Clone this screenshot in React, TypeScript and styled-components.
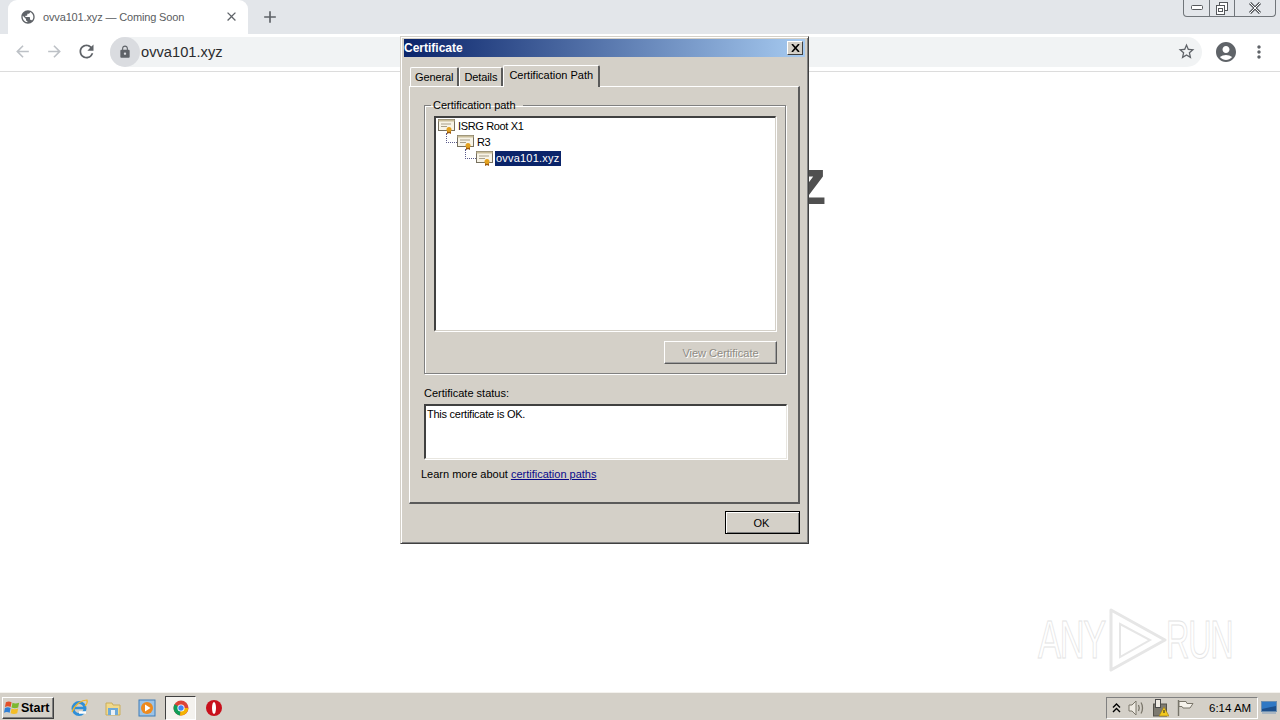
import styled, { createGlobalStyle } from "styled-components";
import {
  MdAccountCircle,
  MdAdd,
  MdArrowBack,
  MdArrowForward,
  MdClose,
  MdLock,
  MdMoreVert,
  MdPublic,
  MdRefresh,
  MdStarBorder,
} from "react-icons/md";

const GlobalStyle = createGlobalStyle`
  html, body {
    margin: 0;
    padding: 0;
    width: 1280px;
    height: 720px;
    overflow: hidden;
    background: #fff;
    font-family: "Liberation Sans", Arial, sans-serif;
  }
  * { box-sizing: border-box; }
`;

const CertIcon = () => (
  <svg width="18" height="17" viewBox="0 0 18 17">
    <rect x="0.5" y="1.5" width="16" height="11" fill="#f7f3e6" stroke="#77705f" />
    <rect x="0.5" y="1.5" width="16" height="2" fill="#c9bd9a" />
    <path d="M3 6h10M3 8.500h6" stroke="#a89f8a" />
    <path d="M9 12l0 4 2-1 2 1 0-4z" fill="#9a5a10" />
    <circle cx="11" cy="11.500" r="2.500" fill="#e3a11e" />
  </svg>
);

const WinFlag = () => (
  <svg width="17" height="17" viewBox="0 0 18 17">
    <path d="M2 3c2-1 4-1 6 0l-1 5c-2-1-4-1-6 0z" fill="#e2502a" />
    <path d="M9 3.500c2 1 4 1 7 0l-1 5c-2 1-5 1-7 0z" fill="#7cb82f" />
    <path d="M1 9c2-1 4-1 6 0l-1 5c-2-1-4-1-6 0z" fill="#2f7fd6" />
    <path d="M8 9.500c2 1 4 1 7 0l-1 5c-2 1-5 1-7 0z" fill="#f4bd27" />
  </svg>
);

const IeIcon = () => (
  <svg width="20" height="20" viewBox="0 0 20 20">
    <circle cx="10" cy="10.500" r="6" fill="none" stroke="#2f8fd8" strokeWidth="3" />
    <path d="M5 10h10" stroke="#2f8fd8" strokeWidth="2.500" />
    <path d="M10 14.500h7" stroke="#fff" strokeWidth="2.500" />
    <path d="M3 14C6 6 13 2 18 2c1 3-1 5-2 6" fill="none" stroke="#f0b429" strokeWidth="1.200" />
  </svg>
);

const FolderIcon = () => (
  <svg width="18" height="18" viewBox="0 0 18 18">
    <path d="M2 4h6l1 2h7v10H2z" fill="#f1d98a" stroke="#c9ad5c" />
    <rect x="4" y="9" width="10" height="7" fill="#6ea9d8" />
    <rect x="7" y="11" width="4" height="5" fill="#e9f0f6" />
  </svg>
);

const MediaIcon = () => (
  <svg width="18" height="18" viewBox="0 0 18 18">
    <rect x="1" y="1" width="16" height="16" fill="#9cc3e6" stroke="#3f7cb8" />
    <circle cx="9" cy="9" r="6" fill="#ee8a1d" />
    <path d="M7 5.500l5.500 3.500L7 12.500z" fill="#fff" />
  </svg>
);

const ChromeIcon = () => (
  <svg width="16" height="16" viewBox="0 0 16 16">
    <circle cx="8" cy="8" r="7.500" fill="#db4437" />
    <path d="M8 8L1.500 4.300A7.500 7.500 0 0 0 7 15.400z" fill="#0f9d58" />
    <path d="M8 8h7.300A7.500 7.500 0 0 1 7 15.400z" fill="#f4b400" />
    <circle cx="8" cy="8" r="3.600" fill="#fff" />
    <circle cx="8" cy="8" r="2.700" fill="#4285f4" />
  </svg>
);

const OperaIcon = () => (
  <svg width="18" height="18" viewBox="0 0 18 18">
    <circle cx="9" cy="9" r="8" fill="#c8101c" />
    <ellipse cx="9" cy="9" rx="2" ry="6" fill="#fff" />
  </svg>
);

const SpeakerIcon = () => (
  <svg width="18" height="16" viewBox="0 0 18 16">
    <path d="M1 5h3l4-4v14l-4-4H1z" fill="#eeeae2" stroke="#7a766a" />
    <path d="M10.500 5c1 2 1 4 0 6M13 2.500c2 3 2 8 0 11" fill="none" stroke="#7a766a" strokeWidth="1.300" />
  </svg>
);

const NetworkIcon = () => (
  <svg width="16" height="18" viewBox="0 0 16 18">
    <rect x="0.500" y="5" width="13" height="12" fill="#7d7a70" stroke="#55524a" />
    <rect x="2.500" y="0.500" width="5" height="8" fill="#eeeae2" stroke="#4a4a4a" />
    <path d="M11 8l5 9H6z" fill="#f2c81e" stroke="#9a7a10" strokeWidth="0.600" />
    <path d="M11 11v3" stroke="#222" />
  </svg>
);

const FlagIcon = () => (
  <svg width="17" height="16" viewBox="0 0 17 16">
    <path d="M1.500 0v16" stroke="#77746a" strokeWidth="1.400" />
    <path d="M2 1.500h7l1 2h6l-3 4.500H6L5 6.500H2z" fill="#f6f3ec" stroke="#7a766a" />
  </svg>
);

const ShowDesktopIcon = () => (
  <svg width="16" height="13" viewBox="0 0 16 13">
    <rect x="0.500" y="0.500" width="15" height="10" fill="#2f78c4" stroke="#6d8fb0" />
    <path d="M1 8l14-3v5H1z" fill="#1c4f8c" />
    <rect x="1" y="11" width="14" height="2" fill="#a9b6c2" />
  </svg>
);

const CaptionMin = () => (
  <svg width="14" height="8" viewBox="0 0 14 8">
    <rect x="1.500" y="1.500" width="11" height="4" rx="1" fill="#fff" stroke="#55585c" />
  </svg>
);

const CaptionRestore = () => (
  <svg width="14" height="13" viewBox="0 0 14 13">
    <rect x="4.500" y="0.500" width="8" height="8" fill="#fff" stroke="#55585c" />
    <rect x="1.500" y="3.500" width="8" height="9" fill="#fff" stroke="#55585c" />
    <rect x="3.500" y="6.500" width="4" height="3" fill="#fff" stroke="#55585c" />
  </svg>
);

const CaptionClose = () => (
  <svg width="14" height="12" viewBox="0 0 14 12">
    <path d="M2 1l10 10M12 1L2 11" stroke="#55585c" strokeWidth="3" />
    <path d="M2 1l10 10M12 1L2 11" stroke="#fff" strokeWidth="1" />
  </svg>
);

const CERT_PATH = [
  { depth: 0, label: "ISRG Root X1", selected: false },
  { depth: 1, label: "R3", selected: false },
  { depth: 2, label: "ovva101.xyz", selected: true },
];

export default function App() {
  return (
    <Screen>
      <GlobalStyle />
      <TabStrip>
        <Tab>
          <MdPublic size={16} color="#5f6368" />
          <TabTitle>ovva101.xyz — Coming Soon</TabTitle>
          <MdClose size={15} color="#5f6368" />
        </Tab>
        <NewTab>
          <MdAdd size={20} color="#5f6368" />
        </NewTab>
        <Caption>
          <CaptionButton $width={25}>
            <CaptionMin />
          </CaptionButton>
          <CaptionButton $width={25}>
            <CaptionRestore />
          </CaptionButton>
          <CaptionButton $width={41}>
            <CaptionClose />
          </CaptionButton>
        </Caption>
      </TabStrip>

      <Toolbar>
        <NavIcons>
          <NavSlot>
            <MdArrowBack size={19} color="#bdc1c6" />
          </NavSlot>
          <NavSlot>
            <MdArrowForward size={19} color="#bdc1c6" />
          </NavSlot>
          <NavSlot>
            <MdRefresh size={21} color="#5f6368" />
          </NavSlot>
        </NavIcons>
        <Omnibox>
          <LockChip>
            <MdLock size={14} color="#5f6368" />
          </LockChip>
          <Url>ovva101.xyz</Url>
          <MdStarBorder size={19} color="#5f6368" />
        </Omnibox>
        <ToolbarEnd>
          <MdAccountCircle size={24} color="#5f6368" />
          <MdMoreVert size={20} color="#5f6368" />
        </ToolbarEnd>
      </Toolbar>

      <Page>
        <Heading>ovva101.xyz</Heading>
        <Watermark>
          <WatermarkWord $scale={0.65}>ANY</WatermarkWord>
          <WatermarkMark width="60" height="64" viewBox="0 0 60 64">
            <path d="M4 2l54 30L4 62z" fill="none" stroke="#e6e6e6" strokeWidth="3" strokeLinejoin="round" />
            <path d="M13 16l30 16-30 17z" fill="none" stroke="#e6e6e6" strokeWidth="2" />
          </WatermarkMark>
          <WatermarkWord $scale={0.61}>RUN</WatermarkWord>
        </Watermark>
      </Page>

      <Dialog>
        <TitleBar>
          <span>Certificate</span>
          <TitleClose>
            <svg width="9" height="8" viewBox="0 0 9 8">
              <path d="M1 0l7 8M8 0L1 8" stroke="#000" strokeWidth="1.600" />
            </svg>
          </TitleClose>
        </TitleBar>
        <Tabs>
          <DialogTab>General</DialogTab>
          <DialogTab>Details</DialogTab>
          <DialogTab $active>Certification Path</DialogTab>
        </Tabs>
        <TabPanel>
          <GroupBox>
            <GroupLegend>Certification path</GroupLegend>
            <TreeView>
              {CERT_PATH.map((node) => (
                <TreeRow key={node.label} $depth={node.depth}>
                  {node.depth > 0 && <TreeLine $depth={node.depth} />}
                  <CertIcon />
                  <TreeLabel $selected={node.selected}>{node.label}</TreeLabel>
                </TreeRow>
              ))}
            </TreeView>
            <GroupActions>
              <DisabledButton>View Certificate</DisabledButton>
            </GroupActions>
          </GroupBox>
          <StatusLabel>Certificate status:</StatusLabel>
          <StatusBox>This certificate is OK.</StatusBox>
          <LearnMore>
            Learn more about <LearnLink>certification paths</LearnLink>
          </LearnMore>
        </TabPanel>
        <DialogFooter>
          <OkButton>OK</OkButton>
        </DialogFooter>
      </Dialog>

      <Taskbar>
        <StartButton>
          <WinFlag />
          Start
        </StartButton>
        <QuickLaunch>
          <QuickItem>
            <IeIcon />
          </QuickItem>
          <QuickItem>
            <FolderIcon />
          </QuickItem>
          <QuickItem>
            <MediaIcon />
          </QuickItem>
          <QuickItem $active>
            <ChromeIcon />
          </QuickItem>
          <QuickItem>
            <OperaIcon />
          </QuickItem>
        </QuickLaunch>
        <Tray>
          <TraySlot $width={18}>
            <svg width="9" height="10" viewBox="0 0 9 10">
              <path d="M1 4.500l3.500-3.500L8 4.500M1 9l3.500-3.500L8 9" fill="none" stroke="#000" strokeWidth="1.400" />
            </svg>
          </TraySlot>
          <TraySlot $width={24}>
            <SpeakerIcon />
          </TraySlot>
          <TraySlot $width={24}>
            <NetworkIcon />
          </TraySlot>
          <TraySlot $width={24}>
            <FlagIcon />
          </TraySlot>
          <Clock>6:14 AM</Clock>
        </Tray>
        <ShowDesktop>
          <ShowDesktopIcon />
        </ShowDesktop>
      </Taskbar>
    </Screen>
  );
}

const Screen = styled.div`
  position: relative;
  width: 1280px;
  height: 720px;
  display: flex;
  flex-direction: column;
  overflow: hidden;
  background: #fff;
`;

const TabStrip = styled.div`
  height: 34px;
  flex: none;
  display: flex;
  align-items: flex-end;
  padding-left: 8px;
  background: #e3e6ea;
`;

const Tab = styled.div`
  width: 240px;
  height: 34px;
  display: flex;
  align-items: center;
  padding: 0 9px 1px 12px;
  background: #fff;
  border-radius: 9px 9px 0 0;
`;

const TabTitle = styled.span`
  flex: 1;
  margin-left: 7px;
  font-size: 11px;
  letter-spacing: -0.15px;
  color: #5a5d61;
`;

const NewTab = styled.div`
  width: 44px;
  height: 34px;
  display: flex;
  align-items: center;
  justify-content: center;
`;

const Caption = styled.div`
  margin-left: auto;
  margin-right: 4px;
  align-self: flex-start;
  height: 17px;
  display: flex;
  background: #e3e6ea;
  border: 1px solid #70757a;
  border-top: none;
  border-radius: 0 0 4px 4px;
`;

const CaptionButton = styled.div<{ $width: number }>`
  width: ${({ $width }) => $width}px;
  display: flex;
  align-items: center;
  justify-content: center;
  & + & {
    border-left: 1px solid #70757a;
  }
`;

const Toolbar = styled.div`
  height: 38px;
  flex: none;
  display: flex;
  align-items: center;
  padding: 0 11px 2px 6px;
  background: #fff;
  border-bottom: 1px solid #dcdcdc;
`;

const NavIcons = styled.div`
  width: 104px;
  display: flex;
  align-items: center;
`;

const NavSlot = styled.div`
  width: 32px;
  display: flex;
  align-items: center;
  justify-content: center;
`;

const Omnibox = styled.div`
  width: 1092px;
  height: 30px;
  display: flex;
  align-items: center;
  padding-right: 6px;
  background: #f1f3f4;
  border-radius: 15px;
`;

const LockChip = styled.div`
  width: 30px;
  height: 30px;
  display: flex;
  align-items: center;
  justify-content: center;
  background: #dadce0;
  border-radius: 50%;
`;

const Url = styled.span`
  flex: 1;
  margin-left: 1px;
  font-size: 14.700px;
  color: #2b2c2e;
`;

const ToolbarEnd = styled.div`
  flex: 1;
  display: flex;
  align-items: center;
  justify-content: flex-end;
  gap: 11px;
`;

const Page = styled.main`
  position: relative;
  flex: 1;
  padding-top: 73px;
  text-align: center;
`;

const Heading = styled.h1`
  margin: 0;
  font-size: 64px;
  line-height: 74px;
  font-weight: 700;
  color: #505050;
`;

const Watermark = styled.div`
  position: absolute;
  left: 1038px;
  top: 536px;
  display: flex;
  align-items: center;
  gap: 3px;
`;

const WatermarkMark = styled.svg`
  margin-right: -4px;
`;

const WatermarkWord = styled.span<{ $scale: number }>`
  width: 66px;
  font-size: 53px;
  line-height: 64px;
  letter-spacing: -2px;
  color: #fff;
  -webkit-text-stroke: 1px #e4e4e4;
  transform: scaleX(${({ $scale }) => $scale});
  transform-origin: left center;
  white-space: nowrap;
`;

const Dialog = styled.section`
  position: absolute;
  left: 400px;
  top: 36px;
  width: 409px;
  height: 508px;
  padding: 2px 3px 3px;
  display: flex;
  flex-direction: column;
  font-size: 11px;
  color: #000;
  background: #d4d0c8;
  border: 1px solid #404040;
  border-top-color: #d4d0c8;
  border-left-color: #d4d0c8;
  box-shadow: inset 1px 1px 0 #fff, inset -1px -1px 0 #808080;
`;

const TitleBar = styled.header`
  height: 18px;
  flex: none;
  display: flex;
  align-items: center;
  justify-content: space-between;
  padding: 0 2px 0 0;
  font-size: 12px;
  font-weight: 700;
  color: #fff;
  background: linear-gradient(90deg, #0a246a, #a6caf0);
`;

const TitleClose = styled.div`
  width: 16px;
  height: 14px;
  display: flex;
  align-items: center;
  justify-content: center;
  background: #d4d0c8;
  border: 1px solid #404040;
  border-top-color: #fff;
  border-left-color: #fff;
`;

const Tabs = styled.div`
  height: 29px;
  flex: none;
  display: flex;
  align-items: flex-end;
  padding-left: 6px;
`;

const DialogTab = styled.div<{ $active?: boolean }>`
  position: relative;
  height: ${({ $active }) => ($active ? 22 : 19)}px;
  padding: ${({ $active }) => ($active ? "0 5px 3px" : "0 4px")};
  display: flex;
  align-items: center;
  margin-bottom: ${({ $active }) => ($active ? -1 : 0)}px;
  letter-spacing: ${({ $active }) => ($active ? 0 : -0.1)}px;
  background: #d4d0c8;
  border: 1px solid #fff;
  border-right: 2px solid #5a5a5a;
  border-bottom: none;
  border-radius: 2px 2px 0 0;
  z-index: ${({ $active }) => ($active ? 1 : 0)};
`;

const TabPanel = styled.div`
  height: 418px;
  flex: none;
  margin: 0 5px;
  padding: 12px 12px 0 14px;
  border: 1px solid #fff;
  border-right: 2px solid #5a5a5a;
  border-bottom: 2px solid #5a5a5a;
`;

const GroupBox = styled.fieldset`
  height: 275px;
  margin: 0;
  padding: 0 9px;
  border: 1px solid #808080;
  box-shadow: 1px 1px 0 #fff, inset 1px 1px 0 #fff;
`;

const GroupLegend = styled.legend`
  margin-left: -3px;
  padding: 0 7px 0 2px;
  font-size: 11px;
  line-height: 13px;
`;

const TreeView = styled.div`
  height: 215px;
  margin-top: 4px;
  background: #fff;
  border: 2px solid #404040;
  border-right: 1px solid #d4d0c8;
  border-bottom: 1px solid #d4d0c8;
  box-shadow: 1px 1px 0 #fff;
`;

const TreeRow = styled.div<{ $depth: number }>`
  position: relative;
  height: 16px;
  display: flex;
  align-items: center;
  padding-left: ${({ $depth }) => $depth * 19 + 2}px;
`;

const TreeLine = styled.span<{ $depth: number }>`
  position: absolute;
  left: ${({ $depth }) => $depth * 19 - 9}px;
  top: -1px;
  height: 10px;
  width: 11px;
  border-left: 1px dotted #5a5a8a;
  border-bottom: 1px dotted #5a5a8a;
`;

const TreeLabel = styled.span<{ $selected: boolean }>`
  margin-left: 1px;
  padding: ${({ $selected }) => ($selected ? "1px 2px 1px 1px" : "1px")};
  line-height: 13px;
  letter-spacing: ${({ $selected }) => ($selected ? 0.2 : -0.35)}px;
  background: ${({ $selected }) => ($selected ? "#0a246a" : "transparent")};
  color: ${({ $selected }) => ($selected ? "#fff" : "#000")};
`;

const GroupActions = styled.div`
  display: flex;
  justify-content: flex-end;
  margin: 10px -1px 0 0;
`;

const DisabledButton = styled.div`
  width: 113px;
  height: 23px;
  display: flex;
  align-items: center;
  justify-content: center;
  color: #8f8c85;
  text-shadow: 1px 1px 0 #fff;
  border: 1px solid #5a5a5a;
  border-top-color: #fff;
  border-left-color: #fff;
  box-shadow: inset -1px -1px 0 #a0a0a0;
`;

const StatusLabel = styled.div`
  margin-top: 12px;
  line-height: 14px;
`;

const StatusBox = styled.div`
  width: 363px;
  height: 55px;
  margin-top: 4px;
  padding: 2px 1px;
  line-height: 13px;
  letter-spacing: -0.25px;
  background: #fff;
  border: 2px solid #404040;
  border-right: 1px solid #e8e6e0;
  border-bottom: 1px solid #e8e6e0;
  box-shadow: 1px 1px 0 #fff;
`;

const LearnMore = styled.div`
  margin: 8px 0 0 -3px;
  line-height: 14px;
`;

const LearnLink = styled.span`
  color: #0a0a8a;
  text-decoration: underline;
`;

const DialogFooter = styled.footer`
  flex: 1;
  display: flex;
  justify-content: flex-end;
  padding: 7px 5px 0 0;
`;

const OkButton = styled.div`
  width: 75px;
  height: 23px;
  display: flex;
  align-items: center;
  justify-content: center;
  padding-right: 2px;
  border: 1px solid #000;
  box-shadow: inset 1px 1px 0 #fff, inset -1px -1px 0 #808080;
`;

const Taskbar = styled.footer`
  position: relative;
  z-index: 2;
  height: 28px;
  flex: none;
  display: flex;
  align-items: center;
  padding: 2px 0 0 2px;
  background: #d4d0c8;
  border-top: 1px solid #f4f2ee;
`;

const StartButton = styled.div`
  width: 52px;
  height: 22px;
  display: flex;
  align-items: center;
  padding-left: 1px;
  font-size: 12.500px;
  font-weight: 700;
  background: #d4d0c8;
  border: 1px solid #404040;
  border-top-color: #fff;
  border-left-color: #fff;
  box-shadow: inset -1px -1px 0 #808080;
`;

const QuickLaunch = styled.div`
  display: flex;
  align-items: center;
  margin-left: 8px;
`;

const QuickItem = styled.div<{ $active?: boolean }>`
  width: ${({ $active }) => ($active ? 31 : 34)}px;
  height: 24px;
  margin: 0 ${({ $active }) => ($active ? 1 : 0)}px;
  display: flex;
  align-items: center;
  justify-content: center;
  background: ${({ $active }) => ($active ? "#f4f2ee" : "transparent")};
  border: ${({ $active }) => ($active ? "1px solid #fff" : "none")};
  border-top-color: #404040;
  border-left-color: #404040;
`;

const Tray = styled.div`
  margin-left: auto;
  width: 152px;
  height: 22px;
  display: flex;
  align-items: center;
  border: 1px solid #fff;
  border-top-color: #808080;
  border-left-color: #808080;
`;

const TraySlot = styled.div<{ $width: number }>`
  width: ${({ $width }) => $width}px;
  display: flex;
  align-items: center;
  justify-content: center;
`;

const Clock = styled.span`
  margin-left: 12px;
  font-size: 11.500px;
  white-space: nowrap;
`;

const ShowDesktop = styled.div`
  width: 22px;
  display: flex;
  justify-content: center;
`;
